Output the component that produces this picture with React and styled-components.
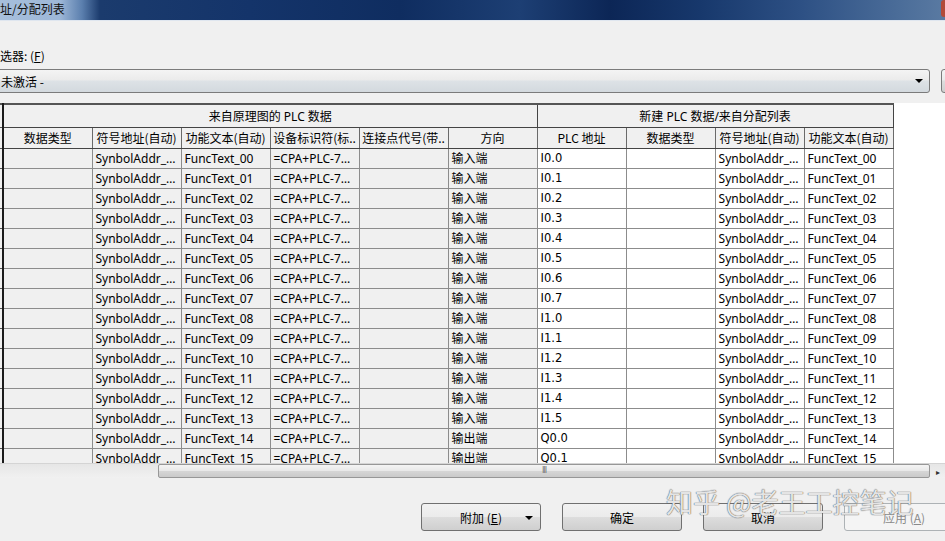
import React from 'react'
import styled, { createGlobalStyle } from 'styled-components'

const GlobalStyle = createGlobalStyle`
    html, body {
        margin: 0;
        padding: 0;
        background: #f0f0f0;
    }
    body {
        font-family: "Noto Sans", "Noto Sans CJK SC", sans-serif;
        font-size: 12px;
        color: #000;
    }
`;

const columns = [
    { label: '数据类型', group: 'left' },
    { label: '符号地址(自动)', group: 'left' },
    { label: '功能文本(自动)', group: 'left' },
    { label: '设备标识符(标..', group: 'left' },
    { label: '连接点代号(带..', group: 'left' },
    { label: '方向', group: 'left' },
    { label: 'PLC 地址', group: 'right' },
    { label: '数据类型', group: 'right' },
    { label: '符号地址(自动)', group: 'right' },
    { label: '功能文本(自动)', group: 'right' },
]

const addrs = ['I0.0', 'I0.1', 'I0.2', 'I0.3', 'I0.4', 'I0.5', 'I0.6', 'I0.7',
    'I1.0', 'I1.1', 'I1.2', 'I1.3', 'I1.4', 'I1.5', 'Q0.0', 'Q0.1', 'Q0.2']

const rows = addrs.map((addr, i) => {
    const n = String(i).padStart(2, '0')
    return [
        '',
        'SynbolAddr_…',
        'FuncText_' + n,
        '=CPA+PLC-7…',
        '',
        addr.startsWith('Q') ? '输出端' : '输入端',
        addr,
        '',
        'SynbolAddr_…',
        'FuncText_' + n,
    ]
})

function App() {
    return (
        <Window>
            <GlobalStyle />
            <TitleBar>
                <TitleText>址/分配列表</TitleText>
                <CloseSliver />
            </TitleBar>
            <Content>
                <FilterLabel>选器: (<u>F</u>)</FilterLabel>
                <ComboRow>
                    <Combo>
                        <ComboText>未激活 -</ComboText>
                        <ComboArrow />
                    </Combo>
                    <SideButton />
                </ComboRow>
            </Content>
            <TableArea>
                <Grid>
                    <colgroup>
                        <col style={{ width: 3 }} />
                        {columns.map((c, i) => <col key={i} style={{ width: 89 }} />)}
                    </colgroup>
                    <thead>
                        <GroupRow>
                            <RowHead />
                            <GroupCell colSpan={6}>来自原理图的 PLC 数据</GroupCell>
                            <GroupCell colSpan={4}>新建 PLC 数据/来自分配列表</GroupCell>
                        </GroupRow>
                        <HeadRow>
                            <RowHead />
                            {columns.map((c, i) => (
                                <HeadCell key={i} $divider={i === 6}>{c.label}</HeadCell>
                            ))}
                        </HeadRow>
                    </thead>
                    <tbody>
                        {rows.map((r, ri) => (
                            <DataRow key={ri}>
                                <RowHead />
                                {r.map((v, ci) => (
                                    <Cell key={ci} $white={ci >= 6} $addr={ci === 6} $divider={ci === 6}>{v}</Cell>
                                ))}
                            </DataRow>
                        ))}
                    </tbody>
                </Grid>
            </TableArea>
            <HScroll>
                <ScrollTrack />
                <ScrollThumb><Grip>III</Grip></ScrollThumb>
                <ScrollArrow>▸</ScrollArrow>
            </HScroll>
            <ButtonRow>
                <Button>
                    <span>附加 (<u>E</u>)</span>
                    <SplitArrow />
                </Button>
                <Button>确定</Button>
                <Button>取消</Button>
                <Button $disabled>应用 (<u>A</u>)</Button>
            </ButtonRow>
            <Watermark>知乎 @老王工控笔记</Watermark>
        </Window>
    )
}

const Window = styled.div`
    position: relative;
    width: 945px;
    height: 541px;
    overflow: hidden;
    display: flex;
    flex-direction: column;
    background: #f0f0f0;
`;

const TitleBar = styled.div`
    height: 20px;
    display: flex;
    align-items: center;
    justify-content: space-between;
    border-bottom: 1px solid #dfe6ef;
    background: linear-gradient(90deg,
        #a7bfdc 0px, #9db7d7 60px, #5b7fae 82px, #1b3b6d 100px,
        #14346a 250px, #0f2d60 400px, #1d3f74 520px, #0c2656 610px,
        #17386c 700px, #2d5084 800px, #4b6d99 900px, #5a7aa2 945px);
`;

const TitleText = styled.div`
    font-family: "Noto Sans CJK SC", sans-serif;
    font-size: 12px;
    color: #111;
    line-height: 20px;
    margin-top: -2px;
`;

const CloseSliver = styled.div`
    width: 4px;
    height: 17px;
    margin-top: -3px;
    background: #b24a3a;
    border-radius: 3px 0 0 3px;
`;

const Content = styled.div`
    display: flex;
    flex-direction: column;
    padding-top: 27px;
`;

const FilterLabel = styled.div`
    font-family: "Noto Sans CJK SC", sans-serif;
    font-size: 12px;
    line-height: 16px;
    height: 16px;
    u { text-decoration: underline; }
`;

const ComboRow = styled.div`
    display: flex;
    margin-top: 5px;
    height: 24px;
`;

const Combo = styled.div`
    width: 933px;
    flex-shrink: 0;
    margin-left: -3px;
    box-sizing: border-box;
    border: 1px solid #7b7b7b;
    border-radius: 3px;
    display: flex;
    align-items: center;
    justify-content: space-between;
    padding: 0 6px 0 3px;
    background: linear-gradient(180deg, #f4f4f4 0%, #ebebeb 45%, #dde2e6 50%, #d3d9de 100%);
`;

const ComboText = styled.span`
    font-family: "Noto Sans CJK SC", sans-serif;
    font-size: 12px;
`;

const ComboArrow = styled.span`
    width: 0;
    height: 0;
    border-left: 4px solid transparent;
    border-right: 4px solid transparent;
    border-top: 4px solid #000;
`;

const SideButton = styled.div`
    width: 20px;
    flex-shrink: 0;
    margin-left: 11px;
    box-sizing: border-box;
    border: 1px solid #7b7b7b;
    border-radius: 3px;
    background: linear-gradient(180deg, #f4f4f4 0%, #ebebeb 45%, #dddddd 50%, #cfcfcf 100%);
`;

const TableArea = styled.div`
    margin-top: 10px;
    height: 360px;
    overflow: hidden;
    background: #fff;
`;

const Grid = styled.table`
    table-layout: fixed;
    border-collapse: collapse;
    width: 893px;
    border-top: 2px solid #555;
`;

const RowHead = styled.td`
    padding: 0;
    background: #f0f0f0;
    border-right: 2px solid #1a1a1a;
    border-bottom: 1px solid #555;
`;

const GroupRow = styled.tr`
    height: 23px;
`;

const GroupCell = styled.th`
    font-weight: normal;
    font-family: "Noto Sans", "Noto Sans CJK SC", sans-serif;
    font-size: 12px;
    text-align: center;
    background: #f0f0f0;
    border-right: 1px solid #444;
    border-bottom: 1px solid #444;
    padding: 0;
`;

const HeadRow = styled.tr`
    height: 21px;
`;

const HeadCell = styled.th`
    font-weight: normal;
    font-family: "Noto Sans CJK SC", sans-serif;
    font-size: 12px;
    text-align: center;
    background: #f0f0f0;
    border-right: 1px solid #6a6a6a;
    border-left: ${({ $divider }) => ($divider ? '1px solid #444' : 'none')};
    border-bottom: 1px solid #444;
    padding: 0 1px;
    white-space: nowrap;
    overflow: hidden;
`;

const DataRow = styled.tr`
    height: 20px;
`;

const Cell = styled.td`
    font-family: ${({ $addr }) => ($addr ? '"DejaVu Sans", sans-serif' : '"Noto Sans", "Noto Sans CJK SC", sans-serif')};
    font-size: ${({ $addr }) => ($addr ? '11.5px' : '12px')};
    background: ${({ $white }) => ($white ? '#ffffff' : '#f0f0f0')};
    border-right: 1px solid #8c8c8c;
    border-left: ${({ $divider }) => ($divider ? '1px solid #555' : 'none')};
    border-bottom: 1px solid #8c8c8c;
    padding: 0 3px;
    white-space: nowrap;
    overflow: hidden;
    line-height: 19px;
`;

const HScroll = styled.div`
    height: 15px;
    display: flex;
    align-items: stretch;
    background: linear-gradient(180deg, #e6e6e6, #f1f1f1);
    border-top: 1px solid #d4d4d4;
    box-sizing: border-box;
`;

const ScrollTrack = styled.div`
    width: 158px;
    flex-shrink: 0;
`;

const ScrollThumb = styled.div`
    width: 772px;
    flex-shrink: 0;
    box-sizing: border-box;
    border: 1px solid #979797;
    border-radius: 2px;
    display: flex;
    align-items: center;
    justify-content: center;
    background: linear-gradient(180deg, #f4f4f4 0%, #e8e8e8 50%, #d6d6d6 51%, #cacaca 100%);
`;

const Grip = styled.span`
    font-family: "DejaVu Sans", sans-serif;
    font-size: 8px;
    letter-spacing: -1px;
    color: #6f6f6f;
    line-height: 8px;
`;

const ScrollArrow = styled.div`
    flex: 1;
    display: flex;
    align-items: center;
    justify-content: center;
    font-size: 8px;
    color: #333;
`;

const ButtonRow = styled.div`
    display: flex;
    gap: 21px;
    padding-left: 421px;
    margin-top: 25px;
`;

const Button = styled.div`
    position: relative;
    width: 120px;
    height: 28px;
    flex-shrink: 0;
    box-sizing: border-box;
    border: 1px solid ${({ $disabled }) => ($disabled ? '#adb2b5' : '#707070')};
    border-radius: 3px;
    display: flex;
    align-items: center;
    justify-content: center;
    font-family: "Noto Sans CJK SC", sans-serif;
    font-size: 12px;
    color: ${({ $disabled }) => ($disabled ? '#8a8a8a' : '#000')};
    background: ${({ $disabled }) => ($disabled
        ? '#f4f4f4'
        : 'linear-gradient(180deg, #f2f2f2 0%, #ebebeb 50%, #dddddd 51%, #cfcfcf 100%)')};
    u { text-decoration: underline; }
`;

const SplitArrow = styled.span`
    position: absolute;
    right: 7px;
    top: 12px;
    width: 0;
    height: 0;
    border-left: 4px solid transparent;
    border-right: 4px solid transparent;
    border-top: 4px solid #000;
`;

const Watermark = styled.div`
    position: absolute;
    left: 666px;
    top: 482px;
    font-family: "Noto Sans CJK SC", sans-serif;
    font-size: 27px;
    color: rgba(255, 255, 255, 0.85);
    text-shadow: 0 0 1px rgba(80, 80, 80, 0.9), 0 0 1px rgba(80, 80, 80, 0.9);
    pointer-events: none;
    white-space: nowrap;
`;

export default App
